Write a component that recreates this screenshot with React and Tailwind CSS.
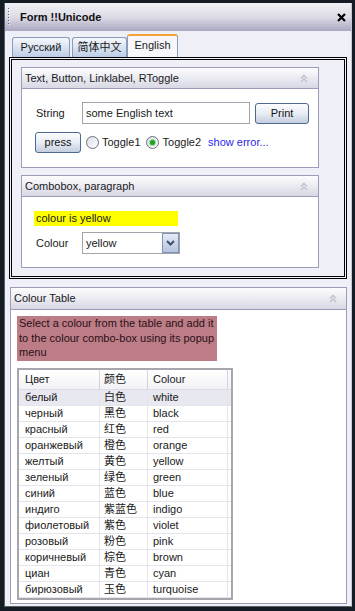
import React from "react";

const rows = [
  ["белый", "白色", "white"],
  ["черный", "黑色", "black"],
  ["красный", "红色", "red"],
  ["оранжевый", "橙色", "orange"],
  ["желтый", "黄色", "yellow"],
  ["зеленый", "绿色", "green"],
  ["синий", "蓝色", "blue"],
  ["индиго", "紫蓝色", "indigo"],
  ["фиолетовый", "紫色", "violet"],
  ["розовый", "粉色", "pink"],
  ["коричневый", "棕色", "brown"],
  ["циан", "青色", "cyan"],
  ["бирюзовый", "玉色", "turquoise"],
];

function ChevUp() {
  return (
    <svg width="8" height="9" viewBox="0 0 8 9" fill="none" stroke="#c4c4d0" strokeWidth="1.6">
      <path d="M1 4.5 L4 1.5 L7 4.5 M1 8 L4 5 L7 8" />
    </svg>
  );
}

function Group({ title, className, children }) {
  return (
    <div className={"flex flex-col border border-[#9d9cb8] bg-white " + className}>
      <div className="h-[21px] shrink-0 flex items-center justify-between pl-[3px] pr-[10px] border-b border-[#9d9cb8] bg-linear-to-b from-[#fdfdfe] to-[#d8d8e4] text-[11px] text-[#1a1a24]">
        <span>{title}</span>
        <ChevUp />
      </div>
      <div className="flex-1 flex flex-col">{children}</div>
    </div>
  );
}

function Radio({ checked }) {
  return (
    <span className="w-[13px] h-[13px] rounded-full border border-[#6a7080] bg-linear-to-br from-[#d8dce4] to-[#ffffff] flex items-center justify-center shrink-0">
      {checked && <span className="w-[5px] h-[5px] rounded-full bg-[#22a022] ring-1 ring-[#9ad89a]" />}
    </span>
  );
}

function Btn({ children, className }) {
  return (
    <div className={"flex items-center justify-center rounded-[3px] border border-[#4e6890] bg-linear-to-b from-[#fbfcfe] via-[#e8ecf4] to-[#c4cedf] text-[11px] text-[#101010] " + className}>
      {children}
    </div>
  );
}

export default function App() {
  return (
    <div className="w-[355px] h-[611px] bg-[#161c24] pt-[3px] pl-[4px] pr-[3px] pb-[4px] font-['Liberation_Sans','Noto_Sans_CJK_SC',sans-serif] text-[11px] text-[#1a1a1a]">
      <div className="h-full flex flex-col border-l border-b border-r border-l-[#5a5f6a] border-b-[#5a5f6a] border-r-[#c8c9d4]">
        {/* Title bar */}
        <div className="h-[28px] shrink-0 flex items-center bg-linear-to-b from-[#f0f0f4] via-[#dddce6] to-[#a9a7c1]">
          <svg width="4" height="18" viewBox="0 0 4 18" className="ml-[3px]">
            {[0, 3, 6, 9, 12, 15].map((y) => (
              <g key={y}>
                <rect x="0" y={y} width="1" height="1" fill="#5a6a90" />
                <rect x="1" y={y + 1} width="1" height="1" fill="#ffffff" />
              </g>
            ))}
          </svg>
          <span className="ml-[8px] font-bold text-[11px] text-[#101010]">Form !!Unicode</span>
          <div className="flex-1" />
          <svg width="9" height="9" viewBox="0 0 9 9" className="mr-[5px]" stroke="#000" strokeWidth="2.2">
            <path d="M1 1 L8 8 M8 1 L1 8" />
          </svg>
        </div>

        {/* Body */}
        <div className="flex-1 flex flex-col bg-[#eff0f7] px-[4px] pt-[3px] pb-[2px]">
          {/* Tabs */}
          <div className="h-[23px] shrink-0 flex items-end pl-[3px]">
            <div className="w-[58px] h-[20px] flex items-center justify-center rounded-t-[3px] border border-b-0 border-[#8b9bb8] bg-linear-to-b from-[#f6f8fc] to-[#bccde6]">
              Русский
            </div>
            <div className="w-[55px] h-[20px] ml-[2px] flex items-center justify-center rounded-t-[3px] border border-b-0 border-[#8b9bb8] bg-linear-to-b from-[#f6f8fc] to-[#bccde6]">
              简体中文
            </div>
            <div className="w-[51px] h-[23px] flex items-center justify-center rounded-t-[3px] border-x border-[#8b9bb8] border-t-2 border-t-[#f2a43a] bg-[#f7f7fb] pb-[2px]">
              English
            </div>
          </div>

          {/* Tab panel */}
          <div className="shrink-0 border-[3px] border-double border-black pt-[7px] pl-[9px] pb-[8px] flex flex-col gap-[7px]">
            <Group title="Text, Button, Linklabel, RToggle" className="w-[298px] h-[101px]">
              <div className="pt-[13px] flex items-center pl-[14px]">
                <span className="w-[46px]">String</span>
                <div className="w-[168px] h-[22px] border border-[#a3a3ab] flex items-center pl-[3px] text-[11px]">
                  some English text
                </div>
                <Btn className="w-[54px] h-[21px] ml-[5px]">Print</Btn>
              </div>
              <div className="mt-[8px] flex items-center pl-[13px]">
                <Btn className="w-[46px] h-[21px]">press</Btn>
                <span className="ml-[5px]"><Radio /></span>
                <span className="ml-[3px]">Toggle1</span>
                <span className="ml-[5px]"><Radio checked /></span>
                <span className="ml-[4px]">Toggle2</span>
                <span className="ml-[7px] text-[#2b1fe8]">show error...</span>
              </div>
            </Group>
            <Group title="Combobox, paragraph" className="w-[298px] h-[93px]">
              <div className="pt-[14px] pl-[12px]">
                <div className="w-[144px] h-[15px] bg-[#ffff00] flex items-center pl-[2px]">colour is yellow</div>
              </div>
              <div className="mt-[6px] flex items-center pl-[14px]">
                <span className="w-[46px]">Colour</span>
                <div className="w-[98px] h-[22px] border border-[#a3a3ab] flex items-center justify-between pl-[3px]">
                  <span>yellow</span>
                  <div className="w-[17px] h-[20px] border border-[#7e93b8] bg-linear-to-b from-[#e4ebf5] to-[#b4c4de] flex items-center justify-center">
                    <svg width="9" height="6" viewBox="0 0 9 6" fill="none" stroke="#3e4e6c" strokeWidth="2">
                      <path d="M1 1 L4.5 4.5 L8 1" />
                    </svg>
                  </div>
                </div>
              </div>
            </Group>
          </div>

          {/* Colour table panel */}
          <div className="mt-[8px] ml-px flex-1 flex flex-col border border-[#9d9cb8] bg-white">
            <div className="h-[22px] shrink-0 flex items-center justify-between pl-[3px] pr-[9px] border-b border-[#9d9cb8] bg-linear-to-b from-[#fdfdfe] to-[#d8d8e4] text-[11px] text-[#1a1a24]">
              <span>Colour Table</span>
              <ChevUp />
            </div>
            <div className="flex-1 pt-[6px] pl-[6px]">
              <div className="w-[200px] h-[45px] bg-[#bd7d87] px-[2px] leading-[14.6px] text-[#2a1018]">
                Select a colour from the table and add it to the colour combo-box using its popup menu
              </div>
              <div className="mt-[7px] w-[216px] border-2 border-[#a6a6ac]">
                <div className="h-[20px] flex border-b border-[#dcdce4] bg-linear-to-b from-[#ffffff] to-[#f2f2f6]">
                  <div className="w-[80px] pl-[6px] flex items-center">Цвет</div>
                  <div className="w-[48px] pl-[4px] flex items-center border-l border-[#d4d4dc]">颜色</div>
                  <div className="w-[81px] pl-[5px] flex items-center border-x border-[#d4d4dc]">Colour</div>
                </div>
                {rows.map((r, i) => (
                  <div
                    key={r[0]}
                    className={"h-[16px] flex border-b border-[#e4e4ec] " + (i === 0 ? "bg-[#e8e8f0]" : "bg-white")}
                  >
                    <div className="w-[80px] pl-[6px] flex items-center">{r[0]}</div>
                    <div className="w-[48px] pl-[4px] flex items-center border-l border-[#e4e4ec]">{r[1]}</div>
                    <div className="w-[81px] pl-[5px] flex items-center border-x border-[#e4e4ec]">{r[2]}</div>
                  </div>
                ))}
              </div>
            </div>
          </div>
        </div>
      </div>
    </div>
  );
}
